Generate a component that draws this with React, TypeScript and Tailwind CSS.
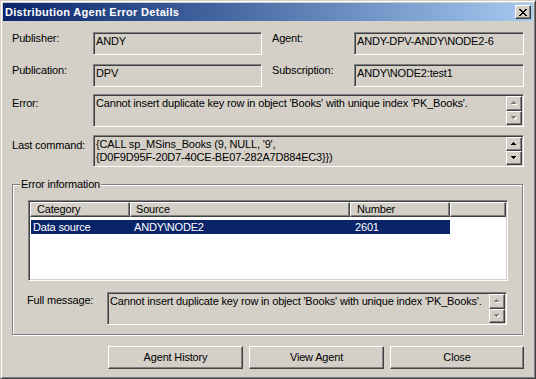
import React from 'react';

const raised =
  'border border-t-white border-l-white border-b-[#404040] border-r-[#404040] shadow-[inset_-1px_-1px_0_#808080] bg-[#d4d0c8]';
const sunken =
  'border border-t-[#808080] border-l-[#808080] border-b-white border-r-white shadow-[inset_1px_1px_0_#404040,inset_-1px_-1px_0_#d4d0c8]';

const Arrow = ({ up, disabled }: { up: boolean; disabled: boolean }) => {
  const d = up ? 'M2 0h1v1h-1z M1 1h3v1h-3z M0 2h5v1h-5z' : 'M0 0h5v1h-5z M1 1h3v1h-3z M2 2h1v1h-1z';
  return (
    <svg width="6" height="4" viewBox="0 0 6 4" shapeRendering="crispEdges">
      {disabled && <path d={d} fill="#ffffff" transform="translate(1 1)" />}
      <path d={d} fill={disabled ? '#808080' : '#000000'} />
    </svg>
  );
};

const ScrollBar = ({ disabled }: { disabled: boolean }) => (
  <div className="w-[16px] flex flex-col">
    <div className={`${raised} flex-1 flex items-center justify-center`}>
      <Arrow up disabled={disabled} />
    </div>
    <div className={`${raised} flex-1 flex items-center justify-center`}>
      <Arrow up={false} disabled={disabled} />
    </div>
  </div>
);

const Field = ({
  children,
  className = '',
  scroll,
}: {
  children: React.ReactNode;
  className?: string;
  scroll?: 'enabled' | 'disabled';
}) => (
  <div className={`${sunken} bg-[#d4d0c8] p-[1px] flex ${className}`}>
    <div className="flex-1 pl-[1px] pt-[1px] leading-[13px] whitespace-nowrap overflow-hidden">{children}</div>
    {scroll && <ScrollBar disabled={scroll === 'disabled'} />}
  </div>
);

const Button = ({ label, className = '' }: { label: string; className?: string }) => (
  <div className={`${raised} h-[23px] flex items-center justify-center ${className}`}>{label}</div>
);

export default function App() {
  return (
    <div
      className="w-[536px] h-[379px] bg-[#d4d0c8] text-black text-[11px] leading-[13px] tracking-[-0.17px] font-['Liberation_Sans',Arial,sans-serif] border border-t-[#d4d0c8] border-l-[#d4d0c8] border-b-[#404040] border-r-[#404040] shadow-[inset_1px_1px_0_#ffffff,inset_-1px_-1px_0_#808080] p-[2px] flex flex-col overflow-hidden"
    >
      {/* Title bar */}
      <div className="h-[18px] bg-gradient-to-r from-[#0a246a] to-[#a6caf0] flex items-center justify-between pl-[2px] pr-[2px]">
        <span className="text-white font-bold tracking-[0.3px]">Distribution Agent Error Details</span>
        <div className={`${raised} w-[16px] h-[14px] flex items-center justify-center`}>
          <svg width="8" height="7" viewBox="0 0 8 7" shapeRendering="crispEdges">
            <path
              d="M0 0h2v1h-2z M6 0h2v1h-2z M1 1h2v1h-2z M5 1h2v1h-2z M2 2h4v1h-4z M3 3h2v1h-2z M2 4h4v1h-4z M1 5h2v1h-2z M5 5h2v1h-2z M0 6h2v1h-2z M6 6h2v1h-2z"
              fill="#000"
            />
          </svg>
        </div>
      </div>

      <div className="flex flex-col pl-[9px] pr-[9px]">
        {/* Publisher / Agent */}
        <div className="flex mt-[11px] h-[23px]">
          <div className="w-[81px]">Publisher:</div>
          <Field className="w-[169px]">ANDY</Field>
          <div className="w-[82px] ml-[10px]">Agent:</div>
          <Field className="w-[170px]">ANDY-DPV-ANDY\NODE2-6</Field>
        </div>

        {/* Publication / Subscription */}
        <div className="flex mt-[9px] h-[23px]">
          <div className="w-[81px]">Publication:</div>
          <Field className="w-[169px]">DPV</Field>
          <div className="w-[82px] ml-[10px]">Subscription:</div>
          <Field className="w-[170px]">ANDY\NODE2:test1</Field>
        </div>

        {/* Error */}
        <div className="flex mt-[7px] h-[33px]">
          <div className="w-[81px] pt-[3px]">Error:</div>
          <Field className="w-[431px]" scroll="disabled">
            Cannot insert duplicate key row in object 'Books' with unique index 'PK_Books'.
          </Field>
        </div>

        {/* Last command */}
        <div className="flex mt-[8px] h-[32px]">
          <div className="w-[81px] pt-[4px]">Last command:</div>
          <Field className="w-[431px]" scroll="enabled">
            <div>{"{CALL sp_MSins_Books (9, NULL, '9',"}</div>
            <div>{'{D0F9D95F-20D7-40CE-BE07-282A7D884EC3}})'}</div>
          </Field>
        </div>

        {/* Error information group */}
        <div className="relative mt-[17px] w-[511px] border border-[#808080] shadow-[inset_1px_1px_0_#ffffff,1px_1px_0_#ffffff] pl-[15px] pt-[15px] pb-[9px]">
          <div className="absolute -top-[7px] left-[7px] bg-[#d4d0c8] px-[1px]">Error information</div>

          <div className={`${sunken} bg-white w-[480px] h-[81px] p-[1px] flex flex-col`}>
            <div className="flex h-[15px]">
              <div className={`${raised} w-[100px] pl-[6px] leading-[13px]`}>Category</div>
              <div className={`${raised} w-[220px] pl-[5px] leading-[13px]`}>Source</div>
              <div className={`${raised} w-[100px] pl-[6px] leading-[13px]`}>Number</div>
              <div className={`${raised} flex-1`} />
            </div>
            <div className="flex mt-[3px] ml-[1px] w-[419px] h-[14px] bg-[#0a246a] text-white items-center">
              <div className="w-[99px] pl-[2px]">Data source</div>
              <div className="w-[220px] pl-[4px]">ANDY\NODE2</div>
              <div className="w-[100px] pl-[5px]">2601</div>
            </div>
          </div>

          <div className="flex mt-[11px] h-[33px]">
            <div className="w-[80px] pt-[2px] -ml-[1px]">Full message:</div>
            <Field className="w-[400px]" scroll="disabled">
              Cannot insert duplicate key row in object 'Books' with unique index 'PK_Books'.
            </Field>
          </div>
        </div>

        {/* Buttons */}
        <div className="flex mt-[11px] ml-[96px] gap-[6px]">
          <Button label="Agent History" className="w-[135px]" />
          <Button label="View Agent" className="w-[135px]" />
          <Button label="Close" className="w-[134px]" />
        </div>
      </div>
    </div>
  );
}
